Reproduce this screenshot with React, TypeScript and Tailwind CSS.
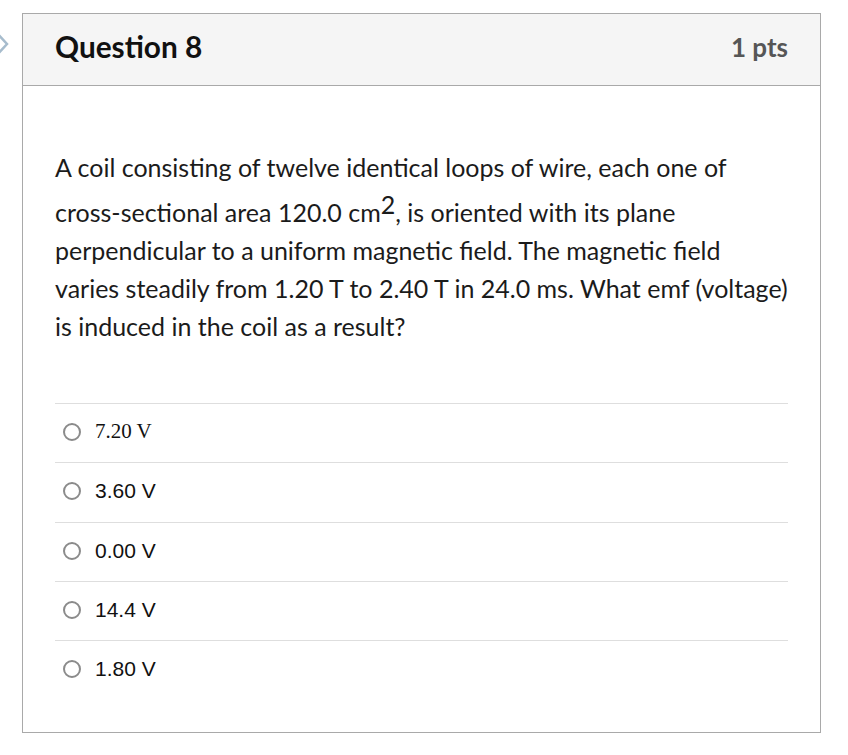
import React from "react";

const answers = [
  { label: "7.20 V", serif: true },
  { label: "3.60 V" },
  { label: "0.00 V" },
  { label: "14.4 V" },
  { label: "1.80 V" },
];

function Radio() {
  return <span className="block w-[18px] h-[18px] rounded-full border-2 border-[#8b8b8b] bg-white shrink-0" />;
}

export default function App() {
  return (
    <div className="w-[848px] h-[755px] bg-white flex pt-[13px] overflow-hidden">
      <div className="w-[22px] shrink-0">
        <svg width="22" height="60" viewBox="0 0 22 60" className="block">
          <polyline points="-3,20 7,31 -3,42" fill="none" stroke="#a7bccd" strokeWidth="2.5" />
        </svg>
      </div>
      <div className="w-[799px] self-start border border-[#a9a9a9] bg-white font-['Lato',sans-serif]">
        <div className="h-[72px] bg-[#f5f5f5] border-b border-[#a9a9a9] flex items-center justify-between px-[32px] pb-[5px]">
          <h2 className="text-[29.8px] font-bold text-[#111]">Question 8</h2>
          <span className="text-[26px] font-bold text-[#565656]">1 pts</span>
        </div>
        <div className="px-[32px] pt-[62px] pb-[33px]">
          <p className="text-[25px] leading-[38px] text-[#1b1b1b]">
            A coil consisting of twelve identical loops of wire, each one of
            <br />
            cross-sectional area 120.0 cm<span className="text-[25px] align-[8px] leading-[36px]">2</span>, is oriented with its plane
            <br />
            perpendicular to a uniform magnetic field. The magnetic field
            <br />
            varies steadily from 1.20 T to 2.40 T in 24.0 ms. What emf (voltage)
            <br />
            is induced in the coil as a result?
          </p>
          <div className="mt-[58px]">
            {answers.map((a, i) => (
              <div
                key={a.label}
                className={
                  i === 1
                    ? "h-[60px] border-t border-[#dedede] flex items-center pl-[8px] pb-[3px] gap-[14px]"
                    : "h-[59px] border-t border-[#dedede] flex items-center pl-[8px] pb-[3px] gap-[14px]"
                }
              >
                <Radio />
                <span
                  className={
                    a.serif
                      ? "text-[21px] text-[#111] font-['Liberation_Serif',serif]"
                      : "text-[21px] text-[#111] font-['Liberation_Sans',sans-serif]"
                  }
                >
                  {a.label}
                </span>
              </div>
            ))}
          </div>
        </div>
      </div>
    </div>
  );
}
